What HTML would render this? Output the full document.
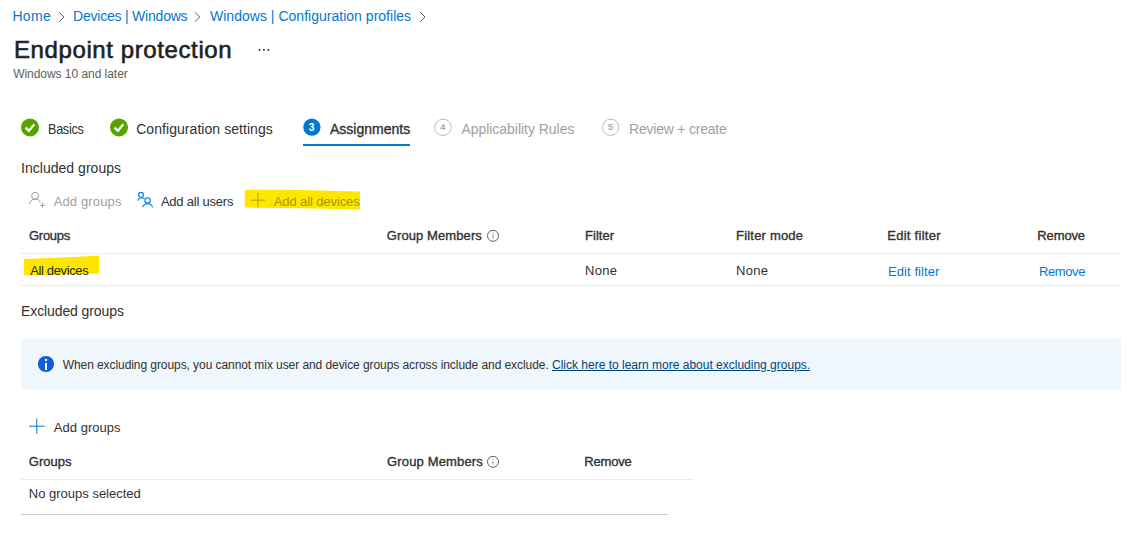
<!DOCTYPE html>
<html><head><meta charset="utf-8">
<style>
html,body{margin:0;padding:0;background:#fff;width:1135px;height:550px;overflow:hidden}
body{font-family:"Liberation Sans",sans-serif;color:#323130;position:relative}
.t{position:absolute;white-space:nowrap;line-height:1}
.bc{color:#0078d4;font-size:14px}
.sb{-webkit-text-stroke:0.35px #323130}
.gray{color:#a19f9d}
.line{position:absolute;height:1px;background:#edebe9}
svg{position:absolute;overflow:visible}
</style></head>
<body>
<!-- breadcrumb -->
<div class="t bc" id="bc1" style="left:12.4px;top:9px;letter-spacing:0.334px">Home</div>
<div class="t bc" id="bc2" style="left:73px;top:9px;letter-spacing:-0.212px">Devices | Windows</div>
<div class="t bc" id="bc3" style="left:210px;top:9px;letter-spacing:0.019px">Windows | Configuration profiles</div>
<svg style="left:0;top:0" width="1135" height="30">
  <g fill="none" stroke="#605e5c" stroke-width="1">
    <polyline points="59.3,12.3 64,17 59.3,21.7"/>
    <polyline points="195,12.3 199.7,17 195,21.7"/>
    <polyline points="420.3,12.3 425,17 420.3,21.7"/>
  </g>
</svg>

<!-- title -->
<div class="t" id="title" style="left:14px;top:37.8px;font-size:24px;color:#201f1e;-webkit-text-stroke:0.6px #201f1e;letter-spacing:0.600px">Endpoint protection</div>
<svg style="left:0;top:40px" width="300" height="20">
  <g fill="#323130"><rect x="258.7" y="9" width="1.6" height="1.8"/><rect x="263.1" y="9" width="1.6" height="1.8"/><rect x="267.6" y="9" width="1.6" height="1.8"/></g>
</svg>
<div class="t" id="sub" style="left:13.2px;top:68.0px;font-size:12px;color:#605e5c;letter-spacing:-0.042px">Windows 10 and later</div>

<!-- tabs -->
<svg style="left:0;top:100px" width="760" height="50">
  <circle cx="30" cy="27.4" r="9" fill="#57a300"/>
  <polyline points="25.6,27.6 28.9,30.9 34.3,24.2" fill="none" stroke="#fff" stroke-width="2.2"/>
  <circle cx="119" cy="27.4" r="9" fill="#57a300"/>
  <polyline points="114.6,27.6 117.9,30.9 123.3,24.2" fill="none" stroke="#fff" stroke-width="2.2"/>
  <circle cx="311.9" cy="27.2" r="8.6" fill="#0078d4"/>
  <text x="311.7" y="30.9" font-size="10.3" font-weight="bold" fill="#fff" text-anchor="middle" font-family="Liberation Sans">3</text>
  <rect x="303" y="44" width="107" height="2" fill="#0078d4"/>
  <circle cx="443" cy="27.3" r="8.2" fill="none" stroke="#bebdbb" stroke-width="1"/>
  <text x="443" y="30.3" font-size="9.5" fill="#a19f9d" stroke="#a19f9d" stroke-width="0.2" text-anchor="middle" font-family="Liberation Sans">4</text>
  <circle cx="610.7" cy="27.3" r="8.2" fill="none" stroke="#bebdbb" stroke-width="1"/>
  <text x="610.7" y="30.3" font-size="9.5" fill="#a19f9d" stroke="#a19f9d" stroke-width="0.2" text-anchor="middle" font-family="Liberation Sans">5</text>
</svg>
<div class="t" id="tab1" style="left:48px;top:122px;font-size:14px;letter-spacing:-0.3px;transform:scaleX(0.9);transform-origin:0 0">Basics</div>
<div class="t" id="tab2" style="left:136.2px;top:122px;font-size:14px;letter-spacing:0.057px">Configuration settings</div>
<div class="t sb" id="tab3" style="left:329.9px;top:122px;font-size:14px;letter-spacing:0.020px">Assignments</div>
<div class="t gray" id="tab4" style="left:461.4px;top:122px;font-size:14px;letter-spacing:-0.033px">Applicability Rules</div>
<div class="t gray" id="tab5" style="left:629px;top:122px;font-size:14px;letter-spacing:-0.215px">Review + create</div>

<div class="t" id="inc" style="left:21px;top:161px;font-size:14px;letter-spacing:0.029px">Included groups</div>

<!-- toolbar -->
<svg style="left:0;top:180px" width="400" height="40">
  <polygon points="244.8,9.7 300,9.9 360,11.5 360,29.5 300,28.3 244.8,27.5" fill="#ffe600"/>
  <g fill="none" stroke="#a19f9d" stroke-width="1">
    <circle cx="35.1" cy="15.8" r="3.5"/>
    <path d="M29.6,24.3 A5.6,5.6 0 0 1 40.3,22.4"/>
    <path d="M40,25.4 H44.8 M42.4,23 V27.8"/>
  </g>
  <g fill="none" stroke="#0078d4" stroke-width="1.1">
    <circle cx="141" cy="14.8" r="2.4"/>
    <path d="M137.6,20.6 A4.6,4.6 0 0 1 144.4,18.6"/>
    <circle cx="147.6" cy="20.4" r="2.7"/>
    <path d="M142.5,27.4 A5.3,5.3 0 0 1 152.6,27.4"/>
  </g>
  <path d="M251,20.2 H265 M258,12.8 V27.5" stroke="#aba600" stroke-width="1" fill="none"/>
</svg>
<div class="t gray" id="addg" style="left:53.7px;top:195px;font-size:13px;letter-spacing:0.134px">Add groups</div>
<div class="t" id="addu" style="left:160.9px;top:195px;font-size:13px;letter-spacing:-0.217px">Add all users</div>
<div class="t" id="addd" style="left:273.8px;top:195px;font-size:13px;color:#9f9b00;letter-spacing:-0.114px">Add all devices</div>

<!-- table 1 -->
<div class="t sb" id="h1" style="left:29px;top:229px;font-size:13px;letter-spacing:-0.280px">Groups</div>
<div class="t sb" id="h2" style="left:386.8px;top:229px;font-size:13px;letter-spacing:0.092px">Group Members</div>
<div class="t sb" id="h3" style="left:585px;top:229px;font-size:13px;letter-spacing:0.040px">Filter</div>
<div class="t sb" id="h4" style="left:736.0px;top:229px;font-size:13px;letter-spacing:0.200px">Filter mode</div>
<div class="t sb" id="h5" style="left:887.2px;top:229px;font-size:13px;letter-spacing:0.280px">Edit filter</div>
<div class="t sb" id="h6" style="left:1037.3px;top:229px;font-size:13px;letter-spacing:-0.120px">Remove</div>
<svg style="left:480px;top:225px" width="30" height="25">
  <circle cx="13" cy="10.8" r="5.5" fill="none" stroke="#605e5c" stroke-width="1"/>
  <rect x="12.4" y="10" width="1.2" height="3.4" fill="#a19f9d"/><rect x="12.4" y="7.9" width="1.2" height="1.1" fill="#a19f9d"/>
</svg>
<div class="line" style="left:21px;top:253px;width:1100px"></div>
<svg style="left:0;top:250px" width="120" height="30">
  <polygon points="23.9,8.9 60,7.5 99,5.7 99,23.5 60,24.6 23.9,25.4" fill="#ffe600"/>
</svg>
<div class="t" id="r1" style="left:30.2px;top:264px;font-size:13px;color:#2b2b00;letter-spacing:-0.360px">All devices</div>
<div class="t" id="r2" style="left:585px;top:264px;font-size:13px;letter-spacing:0.266px">None</div>
<div class="t" id="r3" style="left:736.0px;top:264px;font-size:13px;letter-spacing:0.267px">None</div>
<div class="t" id="r4" style="left:888px;top:265px;font-size:13px;color:#0078d4;letter-spacing:0.080px">Edit filter</div>
<div class="t" id="r5" style="left:1039.0px;top:265px;font-size:13px;color:#0078d4;letter-spacing:-0.400px">Remove</div>
<div class="line" style="left:21px;top:285px;width:1100px"></div>

<div class="t" id="exc" style="left:21px;top:304px;font-size:14px;letter-spacing:-0.100px">Excluded groups</div>

<!-- info bar -->
<div style="position:absolute;left:21px;top:339px;width:1100px;height:50px;background:#eff6fc;border-radius:2px"></div>
<svg style="left:30px;top:350px" width="30" height="30">
  <circle cx="16" cy="14" r="8.1" fill="#0f5fd6"/>
  <rect x="15" y="13" width="2" height="7" fill="#fff"/><circle cx="16" cy="10" r="1.2" fill="#fff"/>
</svg>
<div class="t" id="info" style="left:62.7px;top:359.0px;font-size:12px;letter-spacing:-0.072px">When excluding groups, you cannot mix user and device groups across include and exclude.</div>
<div class="t" id="infolink" style="left:552px;top:359.0px;font-size:12px;color:#004578;text-decoration:underline">Click here to learn more about excluding groups.</div>

<svg style="left:0;top:410px" width="60" height="30">
  <path d="M29,16.2 H44.6 M36.8,8.4 V23.6" stroke="#0078d4" stroke-width="1" fill="none"/>
</svg>
<div class="t" id="addg2" style="left:53.8px;top:421px;font-size:13px;letter-spacing:0.023px">Add groups</div>

<div class="t sb" id="g1" style="left:28.8px;top:455px;font-size:13px;letter-spacing:0.000px">Groups</div>
<div class="t sb" id="g2" style="left:387px;top:455px;font-size:13px;letter-spacing:0.158px">Group Members</div>
<div class="t sb" id="g3" style="left:584.2px;top:455px;font-size:13px;letter-spacing:-0.160px">Remove</div>
<svg style="left:480px;top:451px" width="30" height="25">
  <circle cx="13" cy="10.8" r="5.5" fill="none" stroke="#605e5c" stroke-width="1"/>
  <rect x="12.4" y="10" width="1.2" height="3.4" fill="#a19f9d"/><rect x="12.4" y="7.9" width="1.2" height="1.1" fill="#a19f9d"/>
</svg>
<div class="line" style="left:21px;top:479px;width:672px"></div>
<div class="t" id="g4" style="left:28.8px;top:487px;font-size:13px;letter-spacing:0.000px">No groups selected</div>
<div class="line" style="left:21px;top:514px;width:647px;background:#c8c6c4"></div>
</body></html>
